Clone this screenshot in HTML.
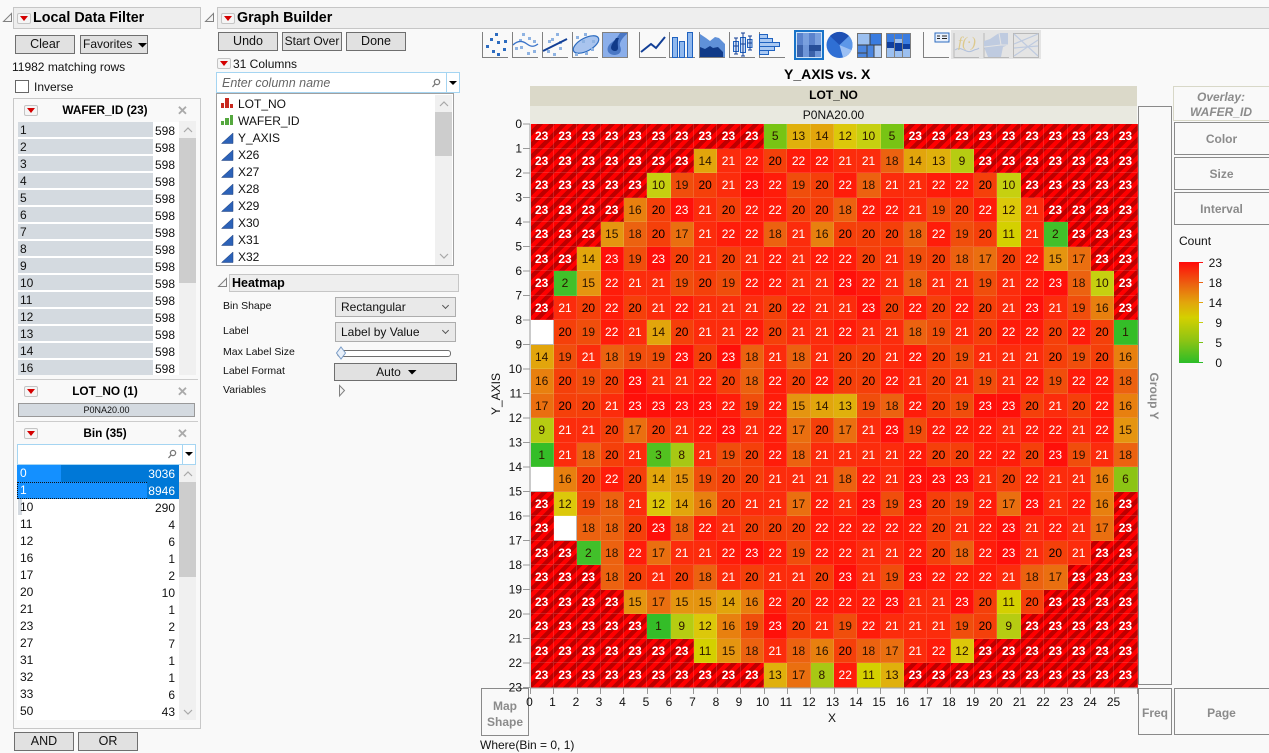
<!DOCTYPE html>
<html><head><meta charset="utf-8"><title>Graph Builder</title>
<style>
html,body{margin:0;padding:0;width:1269px;height:752px;overflow:hidden;background:#f9f9f9;font:12px/16px "Liberation Sans",sans-serif;color:#111}
.t{position:absolute;white-space:nowrap}
.box{position:absolute;box-sizing:border-box}
.tb{background:#eee;border:1px solid #c6c6c6}
.h{font:bold 14.3px/18px "Liberation Sans",sans-serif;color:#000}
.btn{position:absolute;box-sizing:border-box;background:#e1e1e1;border:1px solid #6f6f6f;text-align:center;font-size:12.5px;line-height:17px;color:#111}
.rb{position:absolute;box-sizing:border-box;width:14px;height:11px;border:1px solid #c4c4c4;border-radius:2px;background:#f5f5f5}
.rb:after{content:"";position:absolute;left:2px;top:2px;border-left:4px solid transparent;border-right:4px solid transparent;border-top:5px solid #d40000}
.x{position:absolute;color:#aaa;font:bold 13px/14px "Liberation Sans",sans-serif}
.ph{position:absolute;font:bold 11.8px/16px "Liberation Sans",sans-serif;color:#000;text-align:center}
.lst{position:absolute;overflow:hidden;background:#fff}
.r{position:relative;height:17px;line-height:16px;font-size:12px}
.r i{position:absolute;left:0;top:0;height:15px;width:135px;background:#d4dae0}
.r s{position:absolute;left:2px;top:0;text-decoration:none}
.r b{position:absolute;right:4px;top:1px;font-weight:normal}
.sb{position:absolute;background:#f0f0f0;width:17px}
.sb div{position:absolute;left:0;width:17px;background:#cdcdcd}
.cn{position:absolute;left:238px;font-size:12px;line-height:16px}
.lb{position:absolute;left:223px;font-size:10.5px;line-height:14px;color:#111}
.sel{position:absolute;box-sizing:border-box;left:335px;width:121px;height:20px;background:#e9e9e9;border:1px solid #adadad;font-size:12px;line-height:18px;padding-left:5px}
.sel:after{content:"";position:absolute;right:7px;top:5px;width:4px;height:4px;border-right:1px solid #555;border-bottom:1px solid #555;transform:rotate(45deg)}
.gb{position:absolute;box-sizing:border-box;border:1px solid #8a8a8a;color:#8b8b8b;font:bold 12px/14px "Liberation Sans",sans-serif;text-align:center}
#g{position:absolute;left:530.5px;top:124px;width:607.1px;height:563.5px;display:grid;grid-template-columns:repeat(26,1fr);grid-template-rows:repeat(23,1fr);background:repeating-linear-gradient(135deg,#ff0000 0,#ff0000 4.25px,#bd0000 4.25px,#bd0000 8.5px)}
#g>*{box-sizing:border-box;border-right:1px solid rgba(255,255,255,.13);border-bottom:1px solid rgba(255,255,255,.13);display:block;text-align:center;font:12px/24px "Liberation Sans",sans-serif;font-style:normal;text-decoration:none;color:#2a1400;overflow:hidden}
#g>u{color:#fff;font-weight:bold;font-size:12px}
.w{background:#fff;border-right:1px solid #bbb!important;border-bottom:1px solid #bbb!important}
.c1{background:#34bd28}.c2{background:#42c02a}.c3{background:#52c120}.c5{background:#78c414}.c6{background:#8cc414}.c8{background:#a8c814}.c9{background:#b6cc12}.c10{background:#c6d010}.c11{background:#d4d000}.c12{background:#dcc80a}.c13{background:#e0b00c}.c14{background:#e2a50c}.c15{background:#e59510}.c16{background:#e8800f}.c17{background:#ea6f10}.c18{background:#ec6210}.c19{background:#f04e0c}.c20{background:#f5400a;color:#000!important}.c21{background:#fc2c0c;color:#fff!important}.c22{background:#ff1c0a;color:#fff!important}.c23{background:#ff100a;color:#fff!important}
svg{position:absolute;left:0;top:0}
svg text{font-family:"Liberation Sans",sans-serif;font-size:12px;fill:#111}
</style></head><body>

<!-- LEFT PANEL -->
<div class="box tb" style="left:13px;top:7px;width:188px;height:22px"></div>
<div class="rb" style="left:17px;top:13px"></div>
<div class="t h" style="left:33px;top:9px">Local Data Filter</div>
<div class="btn" style="left:15px;top:35px;width:60px;height:19px">Clear</div>
<div class="btn" style="left:80px;top:35px;width:68px;height:19px;text-align:left;padding-left:2px;font-size:12px">Favorites</div>
<div class="t" style="left:12px;top:59px;font-size:12px">11982 matching rows</div>
<div class="box" style="left:15px;top:80px;width:14px;height:13px;border:1px solid #666;background:#fff"></div>
<div class="t" style="left:34px;top:79px;font-size:12px">Inverse</div>
<div class="box" style="left:13px;top:98px;width:188px;height:631px;border:1px solid #c8c8c8"></div>

<div class="rb" style="left:24px;top:105px"></div>
<div class="ph" style="left:40px;top:102px;width:130px">WAFER_ID (23)</div>
<div class="x" style="left:177px;top:104px">✕</div>
<div class="lst" style="left:18px;top:122px;width:161px;height:253px">
<div class="r"><i></i><s>1</s><b>598</b></div>
<div class="r"><i></i><s>2</s><b>598</b></div>
<div class="r"><i></i><s>3</s><b>598</b></div>
<div class="r"><i></i><s>4</s><b>598</b></div>
<div class="r"><i></i><s>5</s><b>598</b></div>
<div class="r"><i></i><s>6</s><b>598</b></div>
<div class="r"><i></i><s>7</s><b>598</b></div>
<div class="r"><i></i><s>8</s><b>598</b></div>
<div class="r"><i></i><s>9</s><b>598</b></div>
<div class="r"><i></i><s>10</s><b>598</b></div>
<div class="r"><i></i><s>11</s><b>598</b></div>
<div class="r"><i></i><s>12</s><b>598</b></div>
<div class="r"><i></i><s>13</s><b>598</b></div>
<div class="r"><i></i><s>14</s><b>598</b></div>
<div class="r"><i></i><s>16</s><b>598</b></div>
</div>
<div class="sb" style="left:179px;top:121px;height:254px"><div style="top:17px;height:145px"></div></div>
<div class="box" style="left:16px;top:379px;width:182px;height:1px;background:#ccc"></div>

<div class="rb" style="left:24px;top:386px"></div>
<div class="ph" style="left:40px;top:383px;width:130px">LOT_NO (1)</div>
<div class="x" style="left:177px;top:385px">✕</div>
<div class="box" style="left:18px;top:403px;width:177px;height:14px;background:#d4dae0;border:1px solid #999;font-size:9px;line-height:13px;text-align:center">P0NA20.00</div>
<div class="box" style="left:16px;top:421px;width:182px;height:1px;background:#ccc"></div>

<div class="rb" style="left:24px;top:428px"></div>
<div class="ph" style="left:40px;top:425px;width:130px">Bin (35)</div>
<div class="x" style="left:177px;top:427px">✕</div>
<div class="box" style="left:17px;top:444px;width:179px;height:21px;background:#fff;border:1px solid #a5d5f2"></div>
<div class="box" style="left:182px;top:445px;width:1px;height:19px;background:#a5d5f2"></div>
<div class="lst" style="left:17px;top:465px;width:162px;height:255px">
<div class="r" style="background:#0078d7;color:#fff"><i style="width:44px;height:17px;background:#1490ff"></i><s style="left:3px">0</s><b>3036</b></div>
<div class="r" style="background:#1490ff;color:#fff;outline:1px dotted #111;outline-offset:-1px"><i style="left:130px;width:32px;height:17px;background:#0078d7"></i><s style="left:3px">1</s><b>8946</b></div>
<div class="r"><i style="left:1px;width:4px;height:16px"></i><s style="left:3px">10</s><b>290</b></div>
<div class="r"><s style="left:3px">11</s><b>4</b></div>
<div class="r"><s style="left:3px">12</s><b>6</b></div>
<div class="r"><s style="left:3px">16</s><b>1</b></div>
<div class="r"><s style="left:3px">17</s><b>2</b></div>
<div class="r"><s style="left:3px">20</s><b>10</b></div>
<div class="r"><s style="left:3px">21</s><b>1</b></div>
<div class="r"><s style="left:3px">23</s><b>2</b></div>
<div class="r"><s style="left:3px">27</s><b>7</b></div>
<div class="r"><s style="left:3px">31</s><b>1</b></div>
<div class="r"><s style="left:3px">32</s><b>1</b></div>
<div class="r"><s style="left:3px">33</s><b>6</b></div>
<div class="r"><s style="left:3px">50</s><b>43</b></div>
</div>
<div class="sb" style="left:179px;top:465px;height:255px"><div style="top:17px;height:95px"></div></div>
<div class="btn" style="left:14px;top:732px;width:60px;height:19px">AND</div>
<div class="btn" style="left:78px;top:732px;width:60px;height:19px">OR</div>

<!-- MIDDLE PANEL -->
<div class="box tb" style="left:217px;top:7px;width:1060px;height:22px"></div>
<div class="rb" style="left:221px;top:13px"></div>
<div class="t h" style="left:237px;top:9px">Graph Builder</div>
<div class="btn" style="left:218px;top:32px;width:60px;height:19px">Undo</div>
<div class="btn" style="left:282px;top:32px;width:60px;height:19px;font-size:12px">Start Over</div>
<div class="btn" style="left:346px;top:32px;width:60px;height:19px">Done</div>
<div class="rb" style="left:217px;top:58px"></div>
<div class="t" style="left:233px;top:56px;font-size:12px">31 Columns</div>
<div class="box" style="left:216px;top:72px;width:244px;height:21px;background:#fff;border:1px solid #a5d5f2"></div>
<div class="box" style="left:446px;top:73px;width:1px;height:19px;background:#a5d5f2"></div>
<div class="t" style="left:222px;top:75px;font-style:italic;color:#666;font-size:12.5px">Enter column name</div>
<div class="box" style="left:216px;top:93px;width:238px;height:173px;background:#fff;border:1px solid #a0a0a0"></div>
<div class="sb" style="left:435px;top:95px;height:170px"><div style="top:17px;height:44px"></div></div>
<div class="cn" style="top:96px">LOT_NO</div>
<div class="cn" style="top:113px">WAFER_ID</div>
<div class="cn" style="top:130px">Y_AXIS</div>
<div class="cn" style="top:147px">X26</div>
<div class="cn" style="top:164px">X27</div>
<div class="cn" style="top:181px">X28</div>
<div class="cn" style="top:198px">X29</div>
<div class="cn" style="top:215px">X30</div>
<div class="cn" style="top:232px">X31</div>
<div class="cn" style="top:249px">X32</div>

<div class="box tb" style="left:229px;top:274px;width:230px;height:18px"></div>
<div class="t" style="left:232px;top:275px;font-weight:bold;font-size:12.5px;color:#000">Heatmap</div>
<div class="lb" style="top:299px">Bin Shape</div>
<div class="lb" style="top:324px">Label</div>
<div class="lb" style="top:345px">Max Label Size</div>
<div class="lb" style="top:364px">Label Format</div>
<div class="lb" style="top:383px">Variables</div>
<div class="sel" style="top:297px">Rectangular</div>
<div class="sel" style="top:322px">Label by Value</div>
<div class="box" style="left:337px;top:350px;width:114px;height:7px;background:#fff;border:1px solid #6e6e6e;border-radius:3px"></div>
<div class="btn" style="left:334px;top:363px;width:123px;height:18px;font-size:12px;line-height:16px;padding-right:14px">Auto</div>

<!-- CHART -->
<div class="t" style="left:784px;top:65px;font:bold 14px/18px 'Liberation Sans',sans-serif;color:#000">Y_AXIS vs. X</div>
<div class="box" style="left:530px;top:86px;width:607px;height:20px;background:#dbd9c9;text-align:center;font-weight:bold;line-height:19px;color:#000">LOT_NO</div>
<div class="box" style="left:530px;top:106px;width:607px;height:18px;background:#e9e9e0;text-align:center;line-height:18px">P0NA20.00</div>

<div id="g">
<u>23</u><u>23</u><u>23</u><u>23</u><u>23</u><u>23</u><u>23</u><u>23</u><u>23</u><u>23</u><i class=c5>5</i><i class=c13>13</i><i class=c14>14</i><i class=c12>12</i><i class=c10>10</i><i class=c5>5</i><u>23</u><u>23</u><u>23</u><u>23</u><u>23</u><u>23</u><u>23</u><u>23</u><u>23</u><u>23</u>
<u>23</u><u>23</u><u>23</u><u>23</u><u>23</u><u>23</u><u>23</u><i class=c14>14</i><i class=c21>21</i><i class=c22>22</i><i class=c20>20</i><i class=c22>22</i><i class=c22>22</i><i class=c21>21</i><i class=c21>21</i><i class=c18>18</i><i class=c14>14</i><i class=c13>13</i><i class=c9>9</i><u>23</u><u>23</u><u>23</u><u>23</u><u>23</u><u>23</u><u>23</u>
<u>23</u><u>23</u><u>23</u><u>23</u><u>23</u><i class=c10>10</i><i class=c19>19</i><i class=c20>20</i><i class=c21>21</i><i class=c23>23</i><i class=c22>22</i><i class=c19>19</i><i class=c20>20</i><i class=c22>22</i><i class=c18>18</i><i class=c21>21</i><i class=c21>21</i><i class=c22>22</i><i class=c22>22</i><i class=c20>20</i><i class=c10>10</i><u>23</u><u>23</u><u>23</u><u>23</u><u>23</u>
<u>23</u><u>23</u><u>23</u><u>23</u><i class=c16>16</i><i class=c20>20</i><i class=c23>23</i><i class=c21>21</i><i class=c20>20</i><i class=c22>22</i><i class=c22>22</i><i class=c20>20</i><i class=c20>20</i><i class=c18>18</i><i class=c22>22</i><i class=c22>22</i><i class=c21>21</i><i class=c19>19</i><i class=c20>20</i><i class=c22>22</i><i class=c12>12</i><i class=c21>21</i><u>23</u><u>23</u><u>23</u><u>23</u>
<u>23</u><u>23</u><u>23</u><i class=c15>15</i><i class=c18>18</i><i class=c20>20</i><i class=c17>17</i><i class=c21>21</i><i class=c22>22</i><i class=c22>22</i><i class=c18>18</i><i class=c21>21</i><i class=c16>16</i><i class=c20>20</i><i class=c20>20</i><i class=c20>20</i><i class=c18>18</i><i class=c22>22</i><i class=c19>19</i><i class=c20>20</i><i class=c11>11</i><i class=c21>21</i><i class=c2>2</i><u>23</u><u>23</u><u>23</u>
<u>23</u><u>23</u><i class=c14>14</i><i class=c23>23</i><i class=c19>19</i><i class=c23>23</i><i class=c20>20</i><i class=c21>21</i><i class=c20>20</i><i class=c21>21</i><i class=c22>22</i><i class=c21>21</i><i class=c22>22</i><i class=c22>22</i><i class=c20>20</i><i class=c21>21</i><i class=c19>19</i><i class=c20>20</i><i class=c18>18</i><i class=c17>17</i><i class=c20>20</i><i class=c22>22</i><i class=c15>15</i><i class=c17>17</i><u>23</u><u>23</u>
<u>23</u><i class=c2>2</i><i class=c15>15</i><i class=c22>22</i><i class=c21>21</i><i class=c21>21</i><i class=c19>19</i><i class=c20>20</i><i class=c19>19</i><i class=c22>22</i><i class=c22>22</i><i class=c21>21</i><i class=c21>21</i><i class=c23>23</i><i class=c22>22</i><i class=c21>21</i><i class=c18>18</i><i class=c21>21</i><i class=c21>21</i><i class=c19>19</i><i class=c21>21</i><i class=c22>22</i><i class=c23>23</i><i class=c18>18</i><i class=c10>10</i><u>23</u>
<u>23</u><i class=c21>21</i><i class=c20>20</i><i class=c22>22</i><i class=c20>20</i><i class=c21>21</i><i class=c22>22</i><i class=c21>21</i><i class=c21>21</i><i class=c21>21</i><i class=c20>20</i><i class=c22>22</i><i class=c21>21</i><i class=c21>21</i><i class=c23>23</i><i class=c20>20</i><i class=c22>22</i><i class=c20>20</i><i class=c22>22</i><i class=c20>20</i><i class=c21>21</i><i class=c23>23</i><i class=c21>21</i><i class=c19>19</i><i class=c16>16</i><u>23</u>
<i class=w></i><i class=c20>20</i><i class=c19>19</i><i class=c22>22</i><i class=c21>21</i><i class=c14>14</i><i class=c20>20</i><i class=c21>21</i><i class=c21>21</i><i class=c22>22</i><i class=c20>20</i><i class=c21>21</i><i class=c21>21</i><i class=c22>22</i><i class=c21>21</i><i class=c21>21</i><i class=c18>18</i><i class=c19>19</i><i class=c21>21</i><i class=c20>20</i><i class=c22>22</i><i class=c22>22</i><i class=c20>20</i><i class=c22>22</i><i class=c20>20</i><i class=c1>1</i>
<i class=c14>14</i><i class=c19>19</i><i class=c21>21</i><i class=c18>18</i><i class=c19>19</i><i class=c19>19</i><i class=c23>23</i><i class=c20>20</i><i class=c23>23</i><i class=c18>18</i><i class=c21>21</i><i class=c18>18</i><i class=c21>21</i><i class=c20>20</i><i class=c20>20</i><i class=c21>21</i><i class=c22>22</i><i class=c20>20</i><i class=c19>19</i><i class=c21>21</i><i class=c21>21</i><i class=c21>21</i><i class=c20>20</i><i class=c19>19</i><i class=c20>20</i><i class=c16>16</i>
<i class=c16>16</i><i class=c20>20</i><i class=c19>19</i><i class=c20>20</i><i class=c23>23</i><i class=c21>21</i><i class=c21>21</i><i class=c22>22</i><i class=c20>20</i><i class=c18>18</i><i class=c22>22</i><i class=c20>20</i><i class=c22>22</i><i class=c20>20</i><i class=c20>20</i><i class=c22>22</i><i class=c21>21</i><i class=c20>20</i><i class=c21>21</i><i class=c19>19</i><i class=c21>21</i><i class=c22>22</i><i class=c19>19</i><i class=c22>22</i><i class=c22>22</i><i class=c18>18</i>
<i class=c17>17</i><i class=c20>20</i><i class=c20>20</i><i class=c21>21</i><i class=c23>23</i><i class=c23>23</i><i class=c23>23</i><i class=c23>23</i><i class=c22>22</i><i class=c19>19</i><i class=c22>22</i><i class=c15>15</i><i class=c14>14</i><i class=c13>13</i><i class=c19>19</i><i class=c18>18</i><i class=c22>22</i><i class=c20>20</i><i class=c19>19</i><i class=c23>23</i><i class=c23>23</i><i class=c20>20</i><i class=c21>21</i><i class=c20>20</i><i class=c22>22</i><i class=c16>16</i>
<i class=c9>9</i><i class=c21>21</i><i class=c21>21</i><i class=c20>20</i><i class=c17>17</i><i class=c20>20</i><i class=c21>21</i><i class=c22>22</i><i class=c23>23</i><i class=c21>21</i><i class=c22>22</i><i class=c17>17</i><i class=c20>20</i><i class=c17>17</i><i class=c21>21</i><i class=c23>23</i><i class=c19>19</i><i class=c22>22</i><i class=c22>22</i><i class=c22>22</i><i class=c21>21</i><i class=c22>22</i><i class=c22>22</i><i class=c21>21</i><i class=c22>22</i><i class=c15>15</i>
<i class=c1>1</i><i class=c21>21</i><i class=c18>18</i><i class=c20>20</i><i class=c21>21</i><i class=c3>3</i><i class=c8>8</i><i class=c21>21</i><i class=c19>19</i><i class=c20>20</i><i class=c22>22</i><i class=c18>18</i><i class=c21>21</i><i class=c21>21</i><i class=c21>21</i><i class=c21>21</i><i class=c22>22</i><i class=c20>20</i><i class=c20>20</i><i class=c22>22</i><i class=c22>22</i><i class=c20>20</i><i class=c23>23</i><i class=c19>19</i><i class=c21>21</i><i class=c18>18</i>
<i class=w></i><i class=c16>16</i><i class=c20>20</i><i class=c22>22</i><i class=c20>20</i><i class=c14>14</i><i class=c15>15</i><i class=c19>19</i><i class=c20>20</i><i class=c20>20</i><i class=c21>21</i><i class=c21>21</i><i class=c21>21</i><i class=c18>18</i><i class=c22>22</i><i class=c21>21</i><i class=c23>23</i><i class=c23>23</i><i class=c23>23</i><i class=c21>21</i><i class=c20>20</i><i class=c22>22</i><i class=c21>21</i><i class=c21>21</i><i class=c16>16</i><i class=c6>6</i>
<u>23</u><i class=c12>12</i><i class=c19>19</i><i class=c18>18</i><i class=c21>21</i><i class=c12>12</i><i class=c14>14</i><i class=c16>16</i><i class=c20>20</i><i class=c21>21</i><i class=c21>21</i><i class=c17>17</i><i class=c22>22</i><i class=c21>21</i><i class=c23>23</i><i class=c19>19</i><i class=c23>23</i><i class=c20>20</i><i class=c19>19</i><i class=c22>22</i><i class=c17>17</i><i class=c23>23</i><i class=c21>21</i><i class=c22>22</i><i class=c16>16</i><u>23</u>
<u>23</u><i class=w></i><i class=c18>18</i><i class=c18>18</i><i class=c20>20</i><i class=c23>23</i><i class=c18>18</i><i class=c22>22</i><i class=c21>21</i><i class=c20>20</i><i class=c20>20</i><i class=c20>20</i><i class=c22>22</i><i class=c22>22</i><i class=c22>22</i><i class=c22>22</i><i class=c22>22</i><i class=c20>20</i><i class=c21>21</i><i class=c22>22</i><i class=c23>23</i><i class=c21>21</i><i class=c22>22</i><i class=c21>21</i><i class=c17>17</i><u>23</u>
<u>23</u><u>23</u><i class=c2>2</i><i class=c18>18</i><i class=c22>22</i><i class=c17>17</i><i class=c21>21</i><i class=c21>21</i><i class=c22>22</i><i class=c23>23</i><i class=c22>22</i><i class=c19>19</i><i class=c22>22</i><i class=c22>22</i><i class=c21>21</i><i class=c21>21</i><i class=c22>22</i><i class=c20>20</i><i class=c18>18</i><i class=c22>22</i><i class=c23>23</i><i class=c21>21</i><i class=c20>20</i><i class=c21>21</i><u>23</u><u>23</u>
<u>23</u><u>23</u><u>23</u><i class=c18>18</i><i class=c20>20</i><i class=c21>21</i><i class=c20>20</i><i class=c18>18</i><i class=c21>21</i><i class=c20>20</i><i class=c21>21</i><i class=c21>21</i><i class=c20>20</i><i class=c23>23</i><i class=c21>21</i><i class=c19>19</i><i class=c23>23</i><i class=c22>22</i><i class=c22>22</i><i class=c22>22</i><i class=c21>21</i><i class=c18>18</i><i class=c17>17</i><u>23</u><u>23</u><u>23</u>
<u>23</u><u>23</u><u>23</u><u>23</u><i class=c15>15</i><i class=c17>17</i><i class=c15>15</i><i class=c15>15</i><i class=c14>14</i><i class=c16>16</i><i class=c22>22</i><i class=c20>20</i><i class=c22>22</i><i class=c22>22</i><i class=c22>22</i><i class=c23>23</i><i class=c21>21</i><i class=c21>21</i><i class=c23>23</i><i class=c20>20</i><i class=c11>11</i><i class=c20>20</i><u>23</u><u>23</u><u>23</u><u>23</u>
<u>23</u><u>23</u><u>23</u><u>23</u><u>23</u><i class=c1>1</i><i class=c9>9</i><i class=c12>12</i><i class=c16>16</i><i class=c19>19</i><i class=c23>23</i><i class=c20>20</i><i class=c21>21</i><i class=c19>19</i><i class=c22>22</i><i class=c21>21</i><i class=c21>21</i><i class=c21>21</i><i class=c19>19</i><i class=c20>20</i><i class=c9>9</i><u>23</u><u>23</u><u>23</u><u>23</u><u>23</u>
<u>23</u><u>23</u><u>23</u><u>23</u><u>23</u><u>23</u><u>23</u><i class=c11>11</i><i class=c15>15</i><i class=c18>18</i><i class=c21>21</i><i class=c18>18</i><i class=c16>16</i><i class=c20>20</i><i class=c18>18</i><i class=c17>17</i><i class=c21>21</i><i class=c22>22</i><i class=c12>12</i><u>23</u><u>23</u><u>23</u><u>23</u><u>23</u><u>23</u><u>23</u>
<u>23</u><u>23</u><u>23</u><u>23</u><u>23</u><u>23</u><u>23</u><u>23</u><u>23</u><u>23</u><i class=c13>13</i><i class=c17>17</i><i class=c8>8</i><i class=c22>22</i><i class=c11>11</i><i class=c13>13</i><u>23</u><u>23</u><u>23</u><u>23</u><u>23</u><u>23</u><u>23</u><u>23</u><u>23</u><u>23</u>
</div>

<!-- RIGHT SIDE -->
<div class="gb" style="left:1138px;top:106px;width:34px;height:579px"></div>
<div class="t" style="left:1154px;top:396px;transform:translate(-50%,-50%) rotate(90deg);font:bold 12px/14px 'Liberation Sans',sans-serif;color:#8b8b8b">Group Y</div>
<div class="gb" style="left:1138px;top:688px;width:34px;height:47px;line-height:48px">Freq</div>
<div class="gb" style="left:1174px;top:688px;width:100px;height:47px;line-height:48px;padding-right:5px">Page</div>
<div class="gb" style="left:481px;top:688px;width:48px;height:48px;line-height:16px;padding-top:9px;font-size:12px">Map<br>Shape</div>
<div class="gb" style="left:1173px;top:86px;width:100px;height:35px;border-color:#d8d8c8;font-style:italic;line-height:15px;padding:3px 4px 0 0">Overlay:<br>WAFER_ID</div>
<div class="gb" style="left:1174px;top:122px;width:100px;height:33px;line-height:32px;padding-right:5px">Color</div>
<div class="gb" style="left:1174px;top:157px;width:100px;height:33px;line-height:32px;padding-right:5px">Size</div>
<div class="gb" style="left:1174px;top:192px;width:100px;height:33px;line-height:32px;padding-right:5px">Interval</div>
<div class="t" style="left:1179px;top:233px">Count</div>
<div class="box" style="left:1179px;top:262px;width:20px;height:101px;background:linear-gradient(#ff0a0a 0%,#ec6210 22%,#e2a50c 40%,#d4d000 55%,#8cc414 78%,#2cbd28 100%)"></div>
<div class="t" style="left:480px;top:737px;font-size:12px">Where(Bin = 0, 1)</div>

<!-- GRAPHICS -->
<svg width="1269" height="752" viewBox="0 0 1269 752">
<!-- disclosure triangles -->
<g fill="#f4f4f4" stroke="#808080">
<path d="M11.5 13.5V21.5H3.5Z"/><path d="M213.5 13.5V21.5H205.5Z"/><path d="M226.5 278.5V286.5H218.5Z"/>
<path d="M339.5 385.5L344.5 390.5L339.5 396Z"/>
</g>
<path d="M341 347L345.5 353L341 359L336.5 353Z" fill="#e8f0fa" stroke="#7a9cc6"/>
<!-- dropdown arrows -->
<path d="M138 43H147L142.5 47.5Z M408 370H416.5L412 374.5Z" fill="#000"/>
<!-- search icons -->
<g fill="none" stroke="#777" stroke-width="1.3"><circle cx="437" cy="82" r="2.6"/><path d="M435 84L432.5 87"/><circle cx="173" cy="453" r="2.6"/><path d="M171 455L168.5 458"/></g>
<path d="M449 81H457L453 85Z M185 452H193L189 456Z" fill="#000"/>
<!-- scroll chevrons -->
<g fill="none" stroke="#a8a8a8" stroke-width="1.2"><path d="M184 132L188 128L192 132M184 476L188 472L192 476M184 710L188 714L192 710M440 106L444 102L448 106M440 254L444 258L448 254"/></g>
<!-- column icons -->
<path d="M221 103h3v5h-3zM225 98h4v10h-4zM230 104h3v4h-3z" fill="#c8281e"/>
<path d="M221 121h3v4h-3zM225 118h4v7h-4zM230 115h3v10h-3z" fill="#55a83f"/>
<g fill="#2c62b8" stroke="#1e3f78" stroke-width=".5">
<path d="M221.5 143.5L233 133V143.5Z"/><path d="M221.5 160.5L233 150V160.5Z"/><path d="M221.5 177.5L233 167V177.5Z"/><path d="M221.5 194.5L233 184V194.5Z"/><path d="M221.5 211.5L233 201V211.5Z"/><path d="M221.5 228.5L233 218V228.5Z"/><path d="M221.5 245.5L233 235V245.5Z"/><path d="M221.5 262.5L233 252V262.5Z"/>
</g>
<!-- toolbar: L-shaped axes -->
<path d="M482.5 32V57.5H508M512.5 32V57.5H538M542.5 32V57.5H568M572.5 32V57.5H598M639.5 32V57.5H666M669.5 32V57.5H695M699.5 32V57.5H725M729.5 32V57.5H755M759.5 32V57.5H785M923.5 32V57.5H949" fill="none" stroke="#808080"/>
<!-- points -->
<path d="M495 33h3v3h-3zM490 38h3v3h-3zM497 41h3v3h-3zM504 40h3v3h-3zM486 45h3v3h-3zM503 48h3v3h-3zM492 50h3v3h-3zM497 53h3v3h-3z" fill="#2d6cc0"/>
<!-- smooth -->
<path d="M522 33h3v3h-3zM519 39h3v3h-3zM528 37h3v3h-3zM533 40h3v3h-3zM515 47h3v3h-3zM520 46h3v3h-3zM527 52h3v3h-3zM533 50h3v3h-3z" fill="#8fb3e2"/>
<path d="M513 45C518 40 523 41 527 44S534 47 538 44" fill="none" stroke="#3a73c8" stroke-width="1.3"/>
<!-- fit line -->
<path d="M556 33h3v3h-3zM551 38h3v3h-3zM548 40h3v3h-3zM559 41h3v3h-3zM547 50h3v3h-3zM559 47h3v3h-3zM553 53h3v3h-3z" fill="#8fb3e2"/>
<path d="M543 51L567 39" fill="none" stroke="#123f96" stroke-width="2"/>
<!-- ellipse -->
<ellipse cx="586" cy="44.5" rx="14" ry="6.5" transform="rotate(-28 586 44.5)" fill="#a9c4ee" stroke="#2d6cc0" stroke-width="1.2"/>
<path d="M584 33h3v3h-3zM576 36h3v3h-3zM582 40h3v3h-3zM592 40h3v3h-3zM591 48h3v3h-3zM585 52h3v3h-3zM575 53h3v3h-3z" fill="#8fb3e2"/>
<!-- contour -->
<rect x="602.5" y="32.5" width="25" height="25" fill="#8aaeea" stroke="#808080"/>
<path d="M620 33C617 38 615 40 611 43C606 47 606 54 614 55C621 55 622 50 620 46C619 43 622 38 627 34V33Z" fill="#4a77c4"/>
<path d="M616 38C614 42 611 44 611 48C612 52 618 52 618 48C618 45 617 42 619 38Z" fill="#103a88"/>
<!-- line -->
<path d="M641 52L651 44L656 48L665 37" fill="none" stroke="#123f96" stroke-width="2"/>
<!-- bars -->
<path d="M672.5 37.5h5v20h-5zM679.5 41.5h5v16h-5zM687.5 32.5h5v25h-5z" fill="#8fb8ee" stroke="#1f62c0"/>
<!-- area -->
<path d="M700 34L706 38L710 41L715 37L719 38L725 44V57H700Z" fill="#5f90d8"/>
<path d="M700 47L705 49L710 46L713 48L718 47L723 52V57H700Z" fill="#103a88"/>
<!-- box -->
<path d="M733.5 41.5h5v10h-5zM740.5 37.5h5v15h-5zM747.5 39.5h4.500v8h-4.500z" fill="#cfe0f8" stroke="#1f62c0"/>
<path d="M736 38V54M743 33V56M750 36V50M734 38h4M734 54h4M741 33h4M741 56h4M748 36h4M748 50h4M733.500 46h5M740.500 44h5M747.500 43h4.500" fill="none" stroke="#123f96"/>
<!-- histogram -->
<path d="M759.500 34.500h8v4h-8zM759.500 38.500h13v4h-13zM759.500 42.500h20v4h-20zM759.500 46.500h15v4h-15zM759.500 50.500h9v4h-9z" fill="#a9c8f2" stroke="#1f62c0"/>
<!-- heatmap selected -->
<rect x="795" y="31" width="28" height="28" fill="#cfe3f7" stroke="#1873c8" stroke-width="2"/>
<rect x="797" y="33" width="24" height="24" fill="#4f76bd"/>
<path d="M797 33h6v12h-6zM809 33h6v12h-6z" fill="#5b83cc"/>
<path d="M803 33h6v12h-6zM815 33h6v12h-6z" fill="#7aa0de"/>
<path d="M797 45h6v12h-6zM809 51h6v6h-6z" fill="#3b62aa"/>
<path d="M803 45h6v12h-6zM815 51h6v6h-6z" fill="#6f96d8"/>
<path d="M809 45h6v6h-6zM815 45h6v6h-6z" fill="#264e98"/>
<!-- pie -->
<circle cx="839.5" cy="45" r="13" fill="#2f6fd4"/>
<path d="M839.500 45L830 36A13 13 0 0 1 849 36Z" fill="#1e50b4"/>
<path d="M839.500 45L849 36A13 13 0 0 1 851.500 50Z" fill="#5d97e8"/>
<path d="M839.500 45L851.500 50A13 13 0 0 1 843 57.500Z" fill="#9cc0f4"/>
<!-- treemap -->
<rect x="857.500" y="33.500" width="24" height="24" fill="#9cc0f0" stroke="#707070"/>
<path d="M870 34h11v11h-11z" fill="#3a7ce0"/>
<path d="M858 45h8v12h-8zM866 45h8v12h-8z" fill="#4b86e0"/><path d="M874 45h7v12h-7z" fill="#b5d0f5"/>
<path d="M870 33.500V45M857.500 45H881.500M867 45V57.500M874 45V57.500M857.500 53H867" fill="none" stroke="#404040"/>
<!-- mosaic -->
<rect x="886.500" y="33.500" width="24" height="24" fill="#9cc0f0" stroke="#808080"/>
<path d="M887 34h7v8h-7zM895 34h7v5h-7zM903 34h7v10h-7z" fill="#3a7ce0"/>
<path d="M887 42h7v6h-7zM895 43h7v8h-7zM903 44h7v5h-7z" fill="#0f3f9e"/>
<path d="M894.500 33.500V57.500M902.500 33.500V57.500" stroke="#808080"/>
<!-- legend button -->
<rect x="935" y="33" width="14" height="9" fill="#e8f0fc" stroke="#2d6cc0"/>
<path d="M937 36h3M937 38.500h3M942 36h5M942 38.500h5" stroke="#222"/>
<!-- greyed group -->
<rect x="951" y="30" width="90" height="29" fill="#e4e4e4"/>
<path d="M954 33V57.500H979M984 33V57.500H1009" fill="none" stroke="#b8b8b8"/>
<path d="M955 50C961 45 966 54 972 51S977 50 979 48" fill="none" stroke="#b0c0dc"/>
<text x="958" y="47" style="font-family:'Liberation Serif',serif;font-style:italic;font-size:15px;fill:#ddc98c">f(·)</text>
<path d="M990 39L999 33H1008V45L1003 47L1001 57H988L984 47V41Z" fill="#bfcbe0"/>
<path d="M999 33L1001 45L1008 45M984 47L1001 45" fill="none" stroke="#e4e4e4"/>
<rect x="1013.500" y="33.500" width="25" height="24" fill="none" stroke="#b8b8b8"/>
<path d="M1014 34L1038 56M1014 56L1038 40M1014 44L1038 34M1014 48L1038 46" fill="none" stroke="#bfcbe0" stroke-width="1.2"/>
<!-- axis lines and ticks -->
<path d="M530 124V688M530 688H1138" fill="none" stroke="#9a9a9a"/>
<path d="M523 124H530M523 148.500H530M523 173H530M523 197.500H530M523 222H530M523 246.500H530M523 271H530M523 295.500H530M523 320H530M523 344.500H530M523 369H530M523 393.500H530M523 418H530M523 442.500H530M523 467H530M523 491.500H530M523 516H530M523 540.500H530M523 565H530M523 589.500H530M523 614H530M523 638.500H530M523 663H530M523 687.500H530" stroke="#999"/>
<path d="M530.500 688V694M553.500 688V694M577.500 688V694M600.500 688V694M623.500 688V694M647.500 688V694M670.500 688V694M693.500 688V694M717.500 688V694M740.500 688V694M764.500 688V694M787.500 688V694M810.500 688V694M834.500 688V694M857.500 688V694M880.500 688V694M904.500 688V694M927.500 688V694M950.500 688V694M974.500 688V694M997.500 688V694M1020.500 688V694M1044.500 688V694M1067.500 688V694M1090.500 688V694M1114.500 688V694M1137.500 688V694" stroke="#999"/>
<g text-anchor="end">
<text x="522" y="128">0</text><text x="522" y="152.500">1</text><text x="522" y="177">2</text><text x="522" y="201.500">3</text><text x="522" y="226">4</text><text x="522" y="250.500">5</text><text x="522" y="275">6</text><text x="522" y="299.500">7</text><text x="522" y="324">8</text><text x="522" y="348.500">9</text><text x="522" y="373">10</text><text x="522" y="397.500">11</text><text x="522" y="422">12</text><text x="522" y="446.500">13</text><text x="522" y="471">14</text><text x="522" y="495.500">15</text><text x="522" y="520">16</text><text x="522" y="544.500">17</text><text x="522" y="569">18</text><text x="522" y="593.500">19</text><text x="522" y="618">20</text><text x="522" y="642.500">21</text><text x="522" y="667">22</text><text x="522" y="691.500">23</text>
</g>
<g text-anchor="middle">
<text x="529.500" y="706">0</text><text x="552.500" y="706">1</text><text x="576" y="706">2</text><text x="599" y="706">3</text><text x="622.500" y="706">4</text><text x="646" y="706">5</text><text x="669" y="706">6</text><text x="692.500" y="706">7</text><text x="716" y="706">8</text><text x="739" y="706">9</text><text x="762.500" y="706">10</text><text x="786" y="706">11</text><text x="809" y="706">12</text><text x="832.500" y="706">13</text><text x="856" y="706">14</text><text x="879" y="706">15</text><text x="902.500" y="706">16</text><text x="926" y="706">17</text><text x="949" y="706">18</text><text x="972.500" y="706">19</text><text x="996" y="706">20</text><text x="1019.500" y="706">21</text><text x="1043" y="706">22</text><text x="1066.500" y="706">23</text><text x="1090" y="706">24</text><text x="1113.500" y="706">25</text>
<text x="832" y="722">X</text>
<text transform="translate(500 394) rotate(-90)">Y_AXIS</text>
</g>
<!-- legend ticks -->
<path d="M1199 262.500H1203" stroke="#ff1010"/><path d="M1199 282.500H1203" stroke="#ec6210"/><path d="M1199 302.500H1203" stroke="#e2a50c"/><path d="M1199 322.500H1203" stroke="#c6d010"/><path d="M1199 342.500H1203" stroke="#78c414"/><path d="M1199 362.500H1203" stroke="#2cbd28"/>
<g text-anchor="end">
<text x="1222" y="267">23</text><text x="1222" y="287">18</text><text x="1222" y="307">14</text><text x="1222" y="327">9</text><text x="1222" y="347">5</text><text x="1222" y="367">0</text>
</g>
</svg>
</body></html>
